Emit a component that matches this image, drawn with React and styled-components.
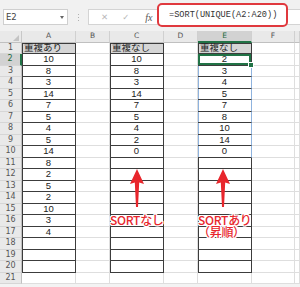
import React from 'react';
import styled, { createGlobalStyle, css } from 'styled-components';

const Global = createGlobalStyle`
  html, body { margin: 0; padding: 0; background: #ffffff; }
  body { font-family: "Noto Sans CJK JP", "Noto Sans", sans-serif; overflow: hidden; }
`;

const Page = styled.div`
  width: 300px;
  height: 287px;
  overflow: hidden;
  background: #f3f3f3;
`;

const Toolbar = styled.div`
  position: relative;
  height: 31px;
  box-sizing: border-box;
  padding: 9px 0 0 3px;
  display: flex;
  align-items: flex-start;
  background: #f1f1f1;
`;

const NameBox = styled.div`
  width: 65px;
  height: 16px;
  box-sizing: border-box;
  background: #fff;
  border: 1px solid #cfcfcf;
  display: flex;
  align-items: center;
  justify-content: space-between;
  padding: 0 3px 0 2px;
  font-family: "DejaVu Sans", sans-serif;
  font-size: 8.5px;
  color: #444;
`;

const Caret = styled.span`
  width: 0;
  height: 0;
  border-left: 2.5px solid transparent;
  border-right: 2.5px solid transparent;
  border-top: 3px solid #666;
`;

const Dots = styled.div`
  width: 20px;
  height: 16px;
  display: flex;
  flex-direction: column;
  align-items: center;
  justify-content: center;
  gap: 2px;
  & > i { width: 1px; height: 1px; background: #b0b0b0; display: block; }
`;

const FormulaBox = styled.div`
  flex: 1;
  height: 16px;
  box-sizing: border-box;
  background: #fff;
  border: 1px solid #d4d4d4;
  border-right: none;
  display: flex;
  align-items: center;
  padding-left: 12px;
  gap: 14px;
  color: #b8b8b8;
  font-family: "DejaVu Sans", sans-serif;
  font-size: 8.5px;
`;

const Fx = styled.span`
  font-family: "Liberation Serif", serif;
  font-style: italic;
  font-size: 10px;
  color: #555;
  margin-left: 2px;
`;

const RedFrame = styled.div`
  position: absolute;
  left: 157px;
  top: 3px;
  width: 131px;
  height: 24px;
  box-sizing: border-box;
  border: 2px solid #e0393e;
  border-radius: 5px;
  display: flex;
  align-items: center;
  padding-left: 10px;
  font-family: "Liberation Mono", monospace;
  font-size: 8.6px;
  color: #333;
  background: #fff;
`;

const Grid = styled.div`
  position: relative;
  display: grid;
  grid-template-columns: 22px 54px 34px 54px 34px 54px 43px 1fr;
  grid-auto-rows: 11.5px;
  background: #fff;
`;

const Corner = styled.div`
  position: relative;
  background: #e9e9e9;
  border-right: 1px solid #c8c8c8;
  border-bottom: 1px solid #c0c0c0;
  box-sizing: border-box;
  &::after {
    content: '';
    position: absolute;
    right: 2px;
    bottom: 1px;
    border-left: 6px solid transparent;
    border-bottom: 6px solid #c4c4c4;
  }
`;

const ColHeader = styled.div`
  box-sizing: border-box;
  background: #e9e9e9;
  border-right: 1px solid #d0d0d0;
  border-bottom: 1px solid #c0c0c0;
  color: #555;
  font-family: "DejaVu Sans", sans-serif;
  font-size: 7.5px;
  line-height: 10.5px;
  text-align: center;
  ${p => p.$active && css`
    background: #d2d2d2;
    color: #1e6b3e;
    border-bottom: 2px solid #217346;
  `}
`;

const RowHeader = styled.div`
  box-sizing: border-box;
  background: #e9e9e9;
  border-right: 1px solid #c0c0c0;
  border-bottom: 1px solid #d6d6d6;
  color: #555;
  font-family: "DejaVu Sans", sans-serif;
  font-size: 8px;
  line-height: 10.5px;
  text-align: center;
  ${p => p.$active && css`
    background: #d2d2d2;
    color: #1e6b3e;
    border-right: 2px solid #217346;
  `}
`;

const Cell = styled.div`
  position: relative;
  box-sizing: border-box;
  border-right: 1px solid #dedede;
  border-bottom: 1px solid #dedede;
  font-family: "Liberation Sans", "Noto Sans CJK JP", sans-serif;
  font-size: 9.5px;
  line-height: 10.5px;
  color: #222;
  text-align: center;
  white-space: nowrap;
  ${p => p.$boxed && css`
    border-right-color: #3c3c3c;
    border-bottom-color: #3c3c3c;
    box-shadow: inset 1px 0 0 #3c3c3c ${p.$first ? ', inset 0 1px 0 #3c3c3c' : ''};
  `}
  ${p => p.$head && css`
    background: #d6d6d6;
    text-align: left;
    padding-left: 2px;
  `}
  ${p => p.$spill && css`
    border-right-color: #8fb3de;
    box-shadow: inset 1px 0 0 #8fb3de;
  `}
  ${p => p.$sel && css`
    box-shadow: inset 0 0 0 2px #217346;
    &::after {
      content: '';
      position: absolute;
      right: -3px;
      bottom: -3px;
      width: 4px;
      height: 4px;
      background: #217346;
      border: 1px solid #fff;
      z-index: 2;
    }
  `}
`;

const Arrow = styled.svg`
  position: absolute;
  top: 138px;
  left: ${p => p.$x}px;
  width: 14px;
  height: 38px;
  overflow: visible;
`;

const Label = styled.div`
  position: absolute;
  left: ${p => p.$x}px;
  top: ${p => p.$y}px;
  font-family: "Noto Sans CJK JP", sans-serif;
  font-size: 12px;
  line-height: 12px;
  font-weight: 500;
  color: #e8262c;
  white-space: nowrap;
  letter-spacing: -0.3px;
  text-shadow:
    1px 0 0 #fff, -1px 0 0 #fff, 0 1px 0 #fff, 0 -1px 0 #fff,
    1px 1px 0 #fff, -1px -1px 0 #fff, 1px -1px 0 #fff, -1px 1px 0 #fff;
`;

const colA = ['重複あり', 10, 8, 3, 14, 7, 5, 4, 5, 14, 8, 2, 5, 2, 10, 3, 4, '', '', ''];
const colC = ['重複なし', 10, 8, 3, 14, 7, 5, 4, 2, 0, '', '', '', '', '', '', '', '', '', ''];
const colE = ['重複なし', 2, 3, 4, 5, 7, 8, 10, 14, 0, '', '', '', '', '', '', '', '', '', ''];
const letters = ['A', 'B', 'C', 'D', 'E', 'F', ''];

function ArrowShape({ x }) {
  return (
    <Arrow $x={x} viewBox="0 0 14 38">
      <path d="M7 0 L14 15 L9.2 13.6 L8 38 L6 38 L4.8 13.6 L0 15 Z" fill="#e8262c" />
    </Arrow>
  );
}

export default function App() {
  const rows = [];
  for (let r = 1; r <= 21; r++) {
    const i = r - 1;
    const inBox = r <= 20;
    rows.push(<RowHeader key={`h${r}`} $active={r === 2}>{r}</RowHeader>);
    rows.push(
      <Cell key={`a${r}`} $boxed={inBox} $first={r === 1} $head={r === 1}>
        {inBox ? colA[i] : ''}
      </Cell>
    );
    rows.push(<Cell key={`b${r}`} />);
    rows.push(
      <Cell key={`c${r}`} $boxed={inBox} $first={r === 1} $head={r === 1}>
        {inBox ? colC[i] : ''}
      </Cell>
    );
    rows.push(<Cell key={`d${r}`} />);
    rows.push(
      <Cell
        key={`e${r}`}
        $boxed={inBox}
        $first={r === 1}
        $head={r === 1}
        $spill={r >= 3 && r <= 10}
        $sel={r === 2}
      >
        {inBox ? colE[i] : ''}
      </Cell>
    );
    rows.push(<Cell key={`f${r}`} />);
    rows.push(<Cell key={`g${r}`} />);
  }

  return (
    <Page>
      <Global />
      <Toolbar>
        <NameBox>
          <span>E2</span>
          <Caret />
        </NameBox>
        <Dots><i /><i /><i /></Dots>
        <FormulaBox>
          <span>✕</span>
          <span>✓</span>
          <Fx>fx</Fx>
        </FormulaBox>
        <RedFrame>=SORT(UNIQUE(A2:A20))</RedFrame>
      </Toolbar>
      <Grid>
        <Corner />
        {letters.map((l, k) => (
          <ColHeader key={k} $active={l === 'E'}>{l}</ColHeader>
        ))}
        {rows}
        <ArrowShape x={130} />
        <ArrowShape x={216} />
        <Label $x={110} $y={183}>SORTなし</Label>
        <Label $x={198} $y={183}>SORTあり<br />（昇順）</Label>
      </Grid>
    </Page>
  );
}
